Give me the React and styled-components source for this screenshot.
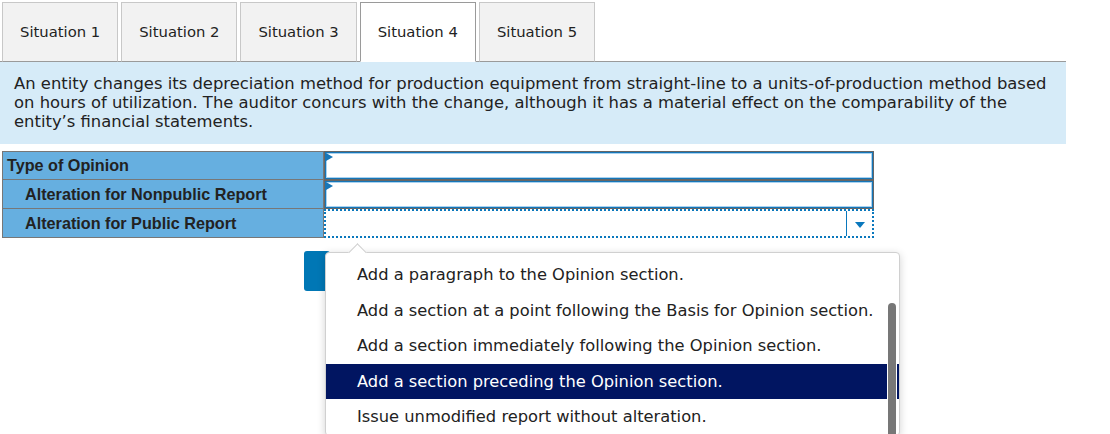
import React from "react";
import styled, { createGlobalStyle } from "styled-components";

const GlobalStyle = createGlobalStyle`
    html, body {
        margin: 0;
        padding: 0;
        background: #ffffff;
        overflow: hidden;
    }
    body {
        font-family: "DejaVu Sans", Verdana, sans-serif;
        color: #222222;
    }
`;

const tabs = ["Situation 1", "Situation 2", "Situation 3", "Situation 4", "Situation 5"];

const rows = [
    { label: "Type of Opinion", indent: false, kind: "input" },
    { label: "Alteration for Nonpublic Report", indent: true, kind: "input" },
    { label: "Alteration for Public Report", indent: true, kind: "select" },
];

const options = [
    "Add a paragraph to the Opinion section.",
    "Add a section at a point following the Basis for Opinion section.",
    "Add a section immediately following the Opinion section.",
    "Add a section preceding the Opinion section.",
    "Issue unmodified report without alteration.",
];

export default function App() {
    return (
        <Page>
            <GlobalStyle />
            <TabBar>
                {tabs.map((t, i) => (
                    <Tab key={t} active={i === 3}>{t}</Tab>
                ))}
            </TabBar>
            <Scenario>
                An entity changes its depreciation method for production equipment from straight-line to a units-of-production method based
                on hours of utilization. The auditor concurs with the change, although it has a material effect on the comparability of the
                entity’s financial statements.
            </Scenario>
            <Answer>
                <Table>
                    {rows.map((r) => (
                        <Row key={r.label}>
                            <Label indent={r.indent}>{r.label}</Label>
                            {r.kind === "input" ? (
                                <InputCell>
                                    <Marker />
                                </InputCell>
                            ) : (
                                <SelectCell>
                                    <ArrowBox>
                                        <Arrow />
                                    </ArrowBox>
                                </SelectCell>
                            )}
                        </Row>
                    ))}
                </Table>
                <CheckButton />
                <Menu>
                    <Caret />
                    {options.map((o, i) => (
                        <Option key={o} selected={i === 3}>{o}</Option>
                    ))}
                    <Scrollbar />
                </Menu>
            </Answer>
        </Page>
    );
}

const Page = styled.div`
    width: 1110px;
    height: 434px;
    overflow: hidden;
`
const TabBar = styled.div`
    display: flex;
    align-items: flex-start;
    gap: 3px;
    width: 1064px;
    padding: 2px 0 0 2px;
    border-bottom: 1px solid #9a9a9a;
    height: 59px;
`
const Tab = styled.div`
    height: 60px;
    box-sizing: border-box;
    padding: 0 17px 1px 17px;
    display: flex;
    align-items: center;
    font-size: 14.8px;
    white-space: nowrap;
    background: ${props => props.active ? "#ffffff" : "#f2f2f2"};
    border: 1px solid ${props => props.active ? "#9a9a9a" : "#c8c8c8"};
    border-bottom: 1px solid ${props => props.active ? "#ffffff" : "#9a9a9a"};
    position: relative;
    z-index: 1;
`
const Scenario = styled.div`
    width: 1066px;
    box-sizing: border-box;
    background: #d6ebf8;
    padding: 12px 10px 14px 14px;
    font-size: 16.4px;
    line-height: 19px;
    height: 82px;
`
const Answer = styled.div`
    position: relative;
    padding: 7px 0 0 2px;
`
const Table = styled.div`
    width: 872px;
    display: flex;
    flex-direction: column;
`
const Row = styled.div`
    display: flex;
    height: 29px;
`
const Label = styled.div`
    width: 322px;
    box-sizing: border-box;
    background: #66afe0;
    border: 1px solid #777777;
    border-top: none;
    ${Row}:first-child & {
        border-top: 1px solid #777777;
    }
    display: flex;
    align-items: center;
    padding-left: ${props => props.indent ? "22px" : "4px"};
    font-family: "Liberation Sans", Arial, sans-serif;
    font-weight: bold;
    font-size: 16.2px;
    white-space: nowrap;
    color: #222222;
`
const InputCell = styled.div`
    position: relative;
    flex: 1;
    box-sizing: border-box;
    background: #ffffff;
    border: 1px solid #666666;
    box-shadow: inset 0 0 0 1px #1676b8, inset 0 0 0 2px #a9d2f0;
`
const Marker = styled.div`
    position: absolute;
    left: 1px;
    top: 1px;
    width: 0;
    height: 0;
    border-top: 4px solid transparent;
    border-bottom: 4px solid transparent;
    border-left: 7px solid #1676b8;
`
const SelectCell = styled.div`
    flex: 1;
    box-sizing: border-box;
    background: #ffffff;
    border: 2px dotted #0a78bd;
    display: flex;
    justify-content: flex-end;
`
const ArrowBox = styled.div`
    width: 25px;
    border-left: 1px solid #0a78bd;
    display: flex;
    align-items: center;
    justify-content: center;
`
const Arrow = styled.div`
    width: 0;
    height: 0;
    border-left: 5px solid transparent;
    border-right: 5px solid transparent;
    border-top: 6px solid #0a78bd;
    margin-top: 2px;
`
const CheckButton = styled.div`
    width: 26px;
    height: 40px;
    margin: 13px 0 0 302px;
    background: #0077b5;
    border-radius: 3px;
`
const Menu = styled.div`
    position: absolute;
    left: 325px;
    top: 108px;
    width: 575px;
    box-sizing: border-box;
    padding-top: 4px;
    background: #ffffff;
    border: 1px solid #d0d0d0;
    border-radius: 4px;
    box-shadow: 0 2px 8px rgba(0, 0, 0, 0.18);
    z-index: 5;
`
const Caret = styled.div`
    position: absolute;
    top: -7px;
    left: 25px;
    width: 12px;
    height: 12px;
    background: #ffffff;
    border-left: 1px solid #d0d0d0;
    border-top: 1px solid #d0d0d0;
    transform: rotate(45deg);
`
const Option = styled.div`
    position: relative;
    height: 35.5px;
    display: flex;
    align-items: center;
    padding-left: 31px;
    font-size: 16.3px;
    white-space: nowrap;
    color: ${props => props.selected ? "#ffffff" : "#222222"};
    background: ${props => props.selected ? "#011561" : "transparent"};
`
const Scrollbar = styled.div`
    position: absolute;
    right: 3px;
    top: 50px;
    width: 8px;
    height: 200px;
    background: #777777;
    border-radius: 4px 4px 0 0;
    box-shadow: 0 0 0 1px #ffffff;
`
